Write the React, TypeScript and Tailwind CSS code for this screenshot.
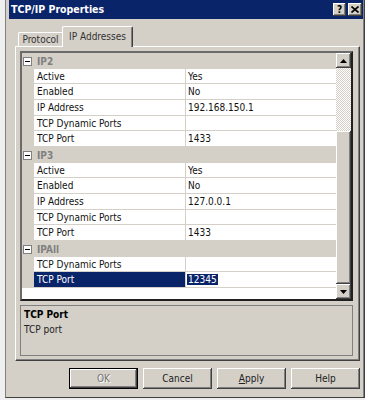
import React from "react";

type Row =
  | { kind: "cat"; name: string; h: string }
  | { kind: "item"; label: string; value: string; h: string; selected?: boolean };

const rows: Row[] = [
  { kind: "cat", name: "IP2", h: "h-[16px]" },
  { kind: "item", label: "Active", value: "Yes", h: "h-[15px]" },
  { kind: "item", label: "Enabled", value: "No", h: "h-[16px]" },
  { kind: "item", label: "IP Address", value: "192.168.150.1", h: "h-[16px]" },
  { kind: "item", label: "TCP Dynamic Ports", value: "", h: "h-[15px]" },
  { kind: "item", label: "TCP Port", value: "1433", h: "h-[16px]" },
  { kind: "cat", name: "IP3", h: "h-[16px]" },
  { kind: "item", label: "Active", value: "Yes", h: "h-[15px]" },
  { kind: "item", label: "Enabled", value: "No", h: "h-[16px]" },
  { kind: "item", label: "IP Address", value: "127.0.0.1", h: "h-[16px]" },
  { kind: "item", label: "TCP Dynamic Ports", value: "", h: "h-[15px]" },
  { kind: "item", label: "TCP Port", value: "1433", h: "h-[16px]" },
  { kind: "cat", name: "IPAll", h: "h-[16px]" },
  { kind: "item", label: "TCP Dynamic Ports", value: "", h: "h-[15px]" },
  { kind: "item", label: "TCP Port", value: "12345", h: "h-[16px]", selected: true },
];

const raised =
  "bg-[#d4d0c8] shadow-[inset_-1px_-1px_#404040,inset_1px_1px_#ffffff,inset_-2px_-2px_#808080,inset_2px_2px_#d4d0c8]";

function Arrow({ up }: { up: boolean }) {
  return (
    <svg width="7" height="4" viewBox="0 0 7 4">
      {up ? <polygon points="3.5,0 7,4 0,4" fill="#000" /> : <polygon points="0,0 7,0 3.5,4" fill="#000" />}
    </svg>
  );
}

function Scrollbar() {
  return (
    <div className="w-[15px] flex flex-col">
      <div className={`h-[15px] flex items-center justify-center ${raised}`}>
        <Arrow up />
      </div>
      <div className="h-[63px] bg-[image:repeating-conic-gradient(#ffffff_0%_25%,#d4d0c8_0%_50%)] bg-[length:2px_2px]" />
      <div className={`flex-1 ${raised}`} />
      <div className={`h-[15px] flex items-center justify-center ${raised}`}>
        <Arrow up={false} />
      </div>
    </div>
  );
}

function Btn({ children, def }: { children: React.ReactNode; def?: boolean }) {
  if (def) {
    return (
      <div className="w-[69px] h-[21px] border border-black">
        <div className={`w-full h-full flex items-center justify-center text-[#707070] [text-shadow:1px_1px_0_#ffffff] ${raised}`}>
          {children}
        </div>
      </div>
    );
  }
  return <div className={`w-[69px] h-[21px] flex items-center justify-center text-[#222] ${raised}`}>{children}</div>;
}

export default function App() {
  return (
    <div className="w-[365px] h-[400px] bg-[#efefef] overflow-hidden font-['DejaVu_Sans_Condensed','DejaVu_Sans',sans-serif] text-[10px] text-black">
      <div className="ml-[5px] w-[360px] h-[398px] bg-[#d4d0c8] border-l border-l-[#808080] border-b border-b-[#404040] pl-[3px] pr-[2px] flex flex-col shadow-[inset_-1px_0_#404040,inset_-2px_0_#808080]">
        {/* Title bar */}
        <div className="h-[19px] shrink-0 bg-[#0a246a] flex items-center pl-[2px] pr-[1px]">
          <span className="text-white font-bold text-[10.5px] leading-none">TCP/IP Properties</span>
          <div className="ml-auto flex gap-[2px]">
            <div className={`w-[13px] h-[13px] flex items-center justify-center font-bold text-[10px] leading-none ${raised}`}>
              ?
            </div>
            <div className={`w-[14px] h-[13px] flex items-center justify-center ${raised}`}>
              <svg width="8" height="7" viewBox="0 0 8 7">
                <path d="M0.5 0.5 L7.5 6.5 M7.5 0.5 L0.5 6.5" stroke="#000" strokeWidth="1.6" />
              </svg>
            </div>
          </div>
        </div>

        {/* Tabs */}
        <div className="h-[27px] shrink-0 flex items-end pl-[9px] relative z-10">
          <div className="h-[14px] w-[44px] flex items-center justify-center pb-[1px] text-[#333] border-t border-l border-white rounded-tl-[2px]">
            Protocol
          </div>
          <div className="h-[21px] w-[71px] -mb-[1px] flex items-center justify-center pb-[1px] text-[#333] bg-[#d4d0c8] border-t border-l border-white border-r border-r-[#404040] rounded-t-[2px] shadow-[inset_-1px_0_#808080]">
            IP Addresses
          </div>
        </div>

        {/* Panel */}
        <div className="ml-[6px] mr-[3px] h-[315px] shrink-0 border-t border-l border-white border-r border-b border-r-[#404040] border-b-[#404040] shadow-[inset_-1px_-1px_#808080] pl-[4px] pt-[4px] flex flex-col">
          <div className="w-[333px] h-[250px] border-2 border-t-[#6b6b6b] border-l-[#6b6b6b] border-r-[#202020] border-b-[#202020] bg-white flex">
            <div className="flex-1 flex flex-col">
              {rows.map((r, i) =>
                r.kind === "cat" ? (
                  <div key={i} className={`${r.h} flex items-center bg-[#d4d0c8]`}>
                    <div className="w-[12px] h-full flex items-center pl-[1px]">
                      <div className="w-[9px] h-[9px] border border-[#808080] bg-white flex items-center justify-center">
                        <div className="w-[5px] h-[1px] bg-black" />
                      </div>
                    </div>
                    <span className="pl-[3px] font-bold text-[#808080]">{r.name}</span>
                  </div>
                ) : (
                  <div key={i} className={`${r.h} flex`}>
                    <div className="w-[12px] bg-[#d4d0c8]" />
                    <div
                      className={`w-[152px] border-b border-r border-[#d4d0c8] pl-[3px] flex items-center ${
                        r.selected ? "bg-[#0a246a] text-white" : "text-[#111]"
                      }`}
                    >
                      {r.label}
                    </div>
                    <div className="flex-1 border-b border-[#d4d0c8] pl-[1px] flex items-center text-[#111]">
                      {r.selected ? (
                        <span className="bg-[#0a246a] text-white px-[1px] leading-[11px]">{r.value}</span>
                      ) : (
                        <span className="pl-[1px]">{r.value}</span>
                      )}
                    </div>
                  </div>
                )
              )}
              <div className="flex-1 bg-white" />
            </div>
            <Scrollbar />
          </div>

          <div className="mt-[4px] w-[333px] h-[51px] border border-[#808080] px-[3px] pt-[1px] leading-[15px]">
            <div className="font-bold">TCP Port</div>
            <div className="text-[#222]">TCP port</div>
          </div>
        </div>

        {/* Buttons */}
        <div className="mt-[7px] mr-[3px] h-[21px] shrink-0 flex justify-end gap-[5px]">
          <Btn def>OK</Btn>
          <Btn>Cancel</Btn>
          <Btn>
            <span>
              <span className="underline">A</span>pply
            </span>
          </Btn>
          <Btn>Help</Btn>
        </div>
      </div>
    </div>
  );
}
